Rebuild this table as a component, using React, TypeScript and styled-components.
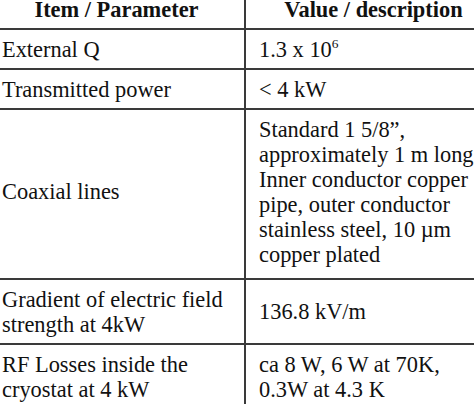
import React from "react";
import styled, { createGlobalStyle } from "styled-components";

const GlobalStyle = createGlobalStyle`
    html, body {
        margin: 0;
        padding: 0;
        background: #fff;
        overflow: hidden;
    }
`;

const Page = styled.div`
    width: 474px;
    height: 404px;
    overflow: hidden;
`;

const Table = styled.table`
    border-collapse: collapse;
    table-layout: fixed;
    width: 516px;
    margin: -12px 0 0 -13px;
    color: #111;
    font-family: "Liberation Serif", "Times New Roman", serif;
    font-size: 22.4px;
    line-height: 25px;
`;

const Head = styled.th`
    border: 2px solid #3a3a3a;
    padding: 6.5px 13px;
    font-weight: 700;
    text-align: center;
    vertical-align: middle;
    white-space: nowrap;
`;

const Cell = styled.td<{ $extra?: number }>`
    border: 2px solid #3a3a3a;
    padding: 6.5px 13px ${(p) => 6.5 + (p.$extra ?? 0)}px;
    text-align: left;
    vertical-align: middle;
`;

const Sup = styled.sup`
    font-size: 0.6em;
    line-height: 0;
    vertical-align: 0.7em;
`;

const rows: { label: React.ReactNode; value: React.ReactNode; extra?: number }[] = [
    {
        label: "External Q",
        value: (
            <>
                1.3 x 10<Sup>6</Sup>
            </>
        ),
    },
    { label: "Transmitted power", value: "< 4 kW" },
    {
        label: "Coaxial lines",
        value: "Standard 1 5/8”, approximately 1 m long Inner conductor copper pipe, outer conductor stainless steel, 10 µm copper plated",
        extra: 5,
    },
    { label: "Gradient of electric field strength at 4kW", value: "136.8 kV/m" },
    { label: "RF Losses inside the cryostat at 4 kW", value: "ca 8 W, 6 W at 70K, 0.3W at 4.3 K" },
];

const App: React.FC = () => {
    return (
        <Page>
            <GlobalStyle />
            <Table>
                <thead>
                    <tr>
                        <Head>Item / Parameter</Head>
                        <Head>Value / description</Head>
                    </tr>
                </thead>
                <tbody>
                    {rows.map((r, i) => (
                        <tr key={i}>
                            <Cell $extra={r.extra}>{r.label}</Cell>
                            <Cell $extra={r.extra}>{r.value}</Cell>
                        </tr>
                    ))}
                </tbody>
            </Table>
        </Page>
    );
};

export default App;
